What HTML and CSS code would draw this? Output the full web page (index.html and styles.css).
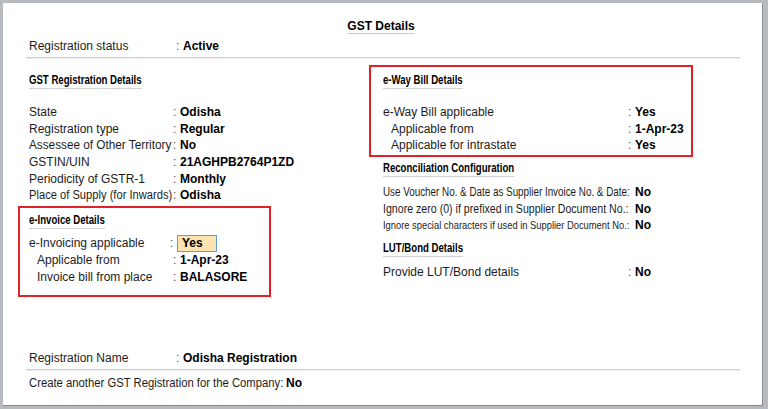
FILE: index.html
```html
<!DOCTYPE html>
<html>
<head>
<meta charset="utf-8">
<link rel="stylesheet" href="styles.css">
</head>
<body>
<div class="panel">
  <div class="title"><span>GST Details</span></div>
  <div class="row status"><span class="lbl w-status">Registration status</span><span class="colon">:</span><span class="val">Active</span></div>
  <div class="rule"></div>
  <div class="cols">
    <div class="col col-left">
      <div class="heading gst-head"><span>GST Registration Details</span></div>
      <div class="rows gst-rows">
        <div class="row"><span class="lbl w-left">State</span><span class="colon">:</span><span class="val">Odisha</span></div>
        <div class="row"><span class="lbl w-left">Registration type</span><span class="colon">:</span><span class="val">Regular</span></div>
        <div class="row"><span class="lbl w-left"><span class="sq sq98">Assessee of Other Territory</span></span><span class="colon">:</span><span class="val">No</span></div>
        <div class="row"><span class="lbl w-left">GSTIN/UIN</span><span class="colon">:</span><span class="val">21AGHPB2764P1ZD</span></div>
        <div class="row"><span class="lbl w-left">Periodicity of GSTR-1</span><span class="colon">:</span><span class="val">Monthly</span></div>
        <div class="row"><span class="lbl w-left"><span class="sq sq93">Place of Supply (for Inwards)</span></span><span class="colon">:</span><span class="val">Odisha</span></div>
      </div>
      <div class="redbox einv-box">
        <div class="heading"><span>e-Invoice Details</span></div>
        <div class="rows einv-rows">
          <div class="row row17"><span class="lbl w-einv">e-Invoicing applicable</span><span class="colon">:</span><span class="val field">Yes</span></div>
          <div class="row row17"><span class="lbl w-left ind">Applicable from</span><span class="colon">:</span><span class="val">1-Apr-23</span></div>
          <div class="row row17"><span class="lbl w-left ind">Invoice bill from place</span><span class="colon">:</span><span class="val">BALASORE</span></div>
        </div>
      </div>
    </div>
    <div class="col col-right">
      <div class="redbox eway-box">
        <div class="heading"><span>e-Way Bill Details</span></div>
        <div class="rows eway-rows">
          <div class="row"><span class="lbl w-right">e-Way Bill applicable</span><span class="colon">:</span><span class="val">Yes</span></div>
          <div class="row"><span class="lbl w-right ind">Applicable from</span><span class="colon">:</span><span class="val">1-Apr-23</span></div>
          <div class="row"><span class="lbl w-right ind">Applicable for intrastate</span><span class="colon">:</span><span class="val">Yes</span></div>
        </div>
      </div>
      <div class="plain">
        <div class="heading recon-head"><span>Reconciliation Configuration</span></div>
        <div class="rows recon-rows">
          <div class="row"><span class="lbl w-recon"><span class="sq sq82">Use Voucher No. &amp; Date as Supplier Invoice No. &amp; Date:</span></span><span class="val">No</span></div>
          <div class="row"><span class="lbl w-recon"><span class="sq sq885">Ignore zero (0) if prefixed in Supplier Document No.:</span></span><span class="val">No</span></div>
          <div class="row"><span class="lbl w-recon small"><span class="sq sq85">Ignore special characters if used in Supplier Document No.:</span></span><span class="val">No</span></div>
        </div>
        <div class="heading lut-head"><span>LUT/Bond Details</span></div>
        <div class="rows lut-rows">
          <div class="row"><span class="lbl w-right">Provide LUT/Bond details</span><span class="colon">:</span><span class="val">No</span></div>
        </div>
      </div>
    </div>
  </div>
  <div class="bottom">
    <div class="row line16"><span class="lbl w-status">Registration Name</span><span class="colon">:</span><span class="val">Odisha Registration</span></div>
    <div class="rule rule-bottom"></div>
    <div class="row line16"><span class="lbl w-create"><span class="sq sq94">Create another GST Registration for the Company:</span></span><span class="val">No</span></div>
  </div>
</div>
</body>
</html>
```

FILE: styles.css
```css
html, body {
  margin: 0;
  padding: 0;
}
body {
  background: #b7bbbf;
  width: 768px;
  height: 409px;
  overflow: hidden;
  font-family: "Liberation Sans", Arial, sans-serif;
  font-size: 12px;
  color: #1c1c1c;
}
.panel {
  margin: 3px 0 0 3px;
  width: 760px;
  height: 403px;
  box-sizing: border-box;
  background: #ffffff;
  border-right: 1px solid #878b8f;
  border-bottom: 1px solid #878b8f;
  padding: 15px 0 14px 23px;
  display: flex;
  flex-direction: column;
}
.title {
  width: 714px;
  text-align: center;
  line-height: 16px;
  font-weight: bold;
  color: #000;
}
.title span {
  margin-left: -4px;
  text-decoration: underline;
  text-decoration-color: #c9c9c9;
  text-underline-offset: 3px;
}
.row {
  display: flex;
  align-items: center;
  height: 16.6px;
  line-height: 16px;
  white-space: nowrap;
  padding-left: 3px;
}
.row17 {
  height: 17px;
}
.line16 {
  height: 16px;
}
.status {
  margin-top: 4px;
  height: 16px;
}
.lbl {
  flex: none;
}
.colon {
  flex: none;
  width: 7px;
  color: #555;
}
.val {
  font-weight: bold;
  color: #000;
}
.sq {
  display: inline-block;
  transform-origin: 0 50%;
}
.sq98 { transform: scaleX(0.98); }
.sq94 { transform: scaleX(0.94); }
.sq93 { transform: scaleX(0.93); }
.sq885 { transform: scaleX(0.885); }
.sq85 { transform: scaleX(0.85); }
.sq82 { transform: scaleX(0.82); }
.w-status { width: 147px; }
.w-left { width: 144px; }
.w-einv { width: 141px; }
.w-right { width: 245px; }
.w-recon { width: 252px; }
.w-create { width: 257px; }
.ind { padding-left: 8px; box-sizing: border-box; }
.rule {
  width: 714px;
  height: 0;
  border-top: 1px solid #cfcfcf;
  border-bottom: 1px solid #ededed;
  margin-top: 3px;
}
.cols {
  display: grid;
  grid-template-columns: 343px 371px;
}
.heading {
  line-height: 16px;
  height: 16px;
  padding-left: 3px;
  font-weight: bold;
  color: #000;
  white-space: nowrap;
}
.heading span {
  display: inline-block;
  line-height: 15px;
  border-bottom: 1px solid #d2d2d2;
  transform: scaleX(0.8);
  transform-origin: 0 50%;
}
.gst-head { margin-top: 13px; }
.gst-rows { margin-top: 16px; }
.redbox {
  border: 2px solid #e3212b;
}
.einv-box {
  margin: 2px 0 0 -8px;
  width: 253px;
  box-sizing: border-box;
  padding: 4px 0 9px 6px;
}
.einv-rows { margin-top: 7px; }
.field {
  display: inline-block;
  width: 40px;
  height: 17px;
  box-sizing: border-box;
  line-height: 15px;
  padding-left: 4px;
  background: #fde3b1;
  border: 1px solid #5f9fd6;
}
.eway-box {
  margin-top: 6px;
  width: 324px;
  box-sizing: border-box;
  padding: 5px 0 1px 9px;
}
.eway-rows { margin-top: 16px; }
.plain { padding-left: 11px; }
.recon-head { margin-top: 3px; }
.recon-rows { margin-top: 8px; }
.small { font-size: 11px; }
.lut-head { margin-top: 6px; }
.lut-rows { margin-top: 8px; }
.bottom {
  margin-top: auto;
}
.rule-bottom {
  margin-top: 3px;
  margin-bottom: 4px;
}
```
